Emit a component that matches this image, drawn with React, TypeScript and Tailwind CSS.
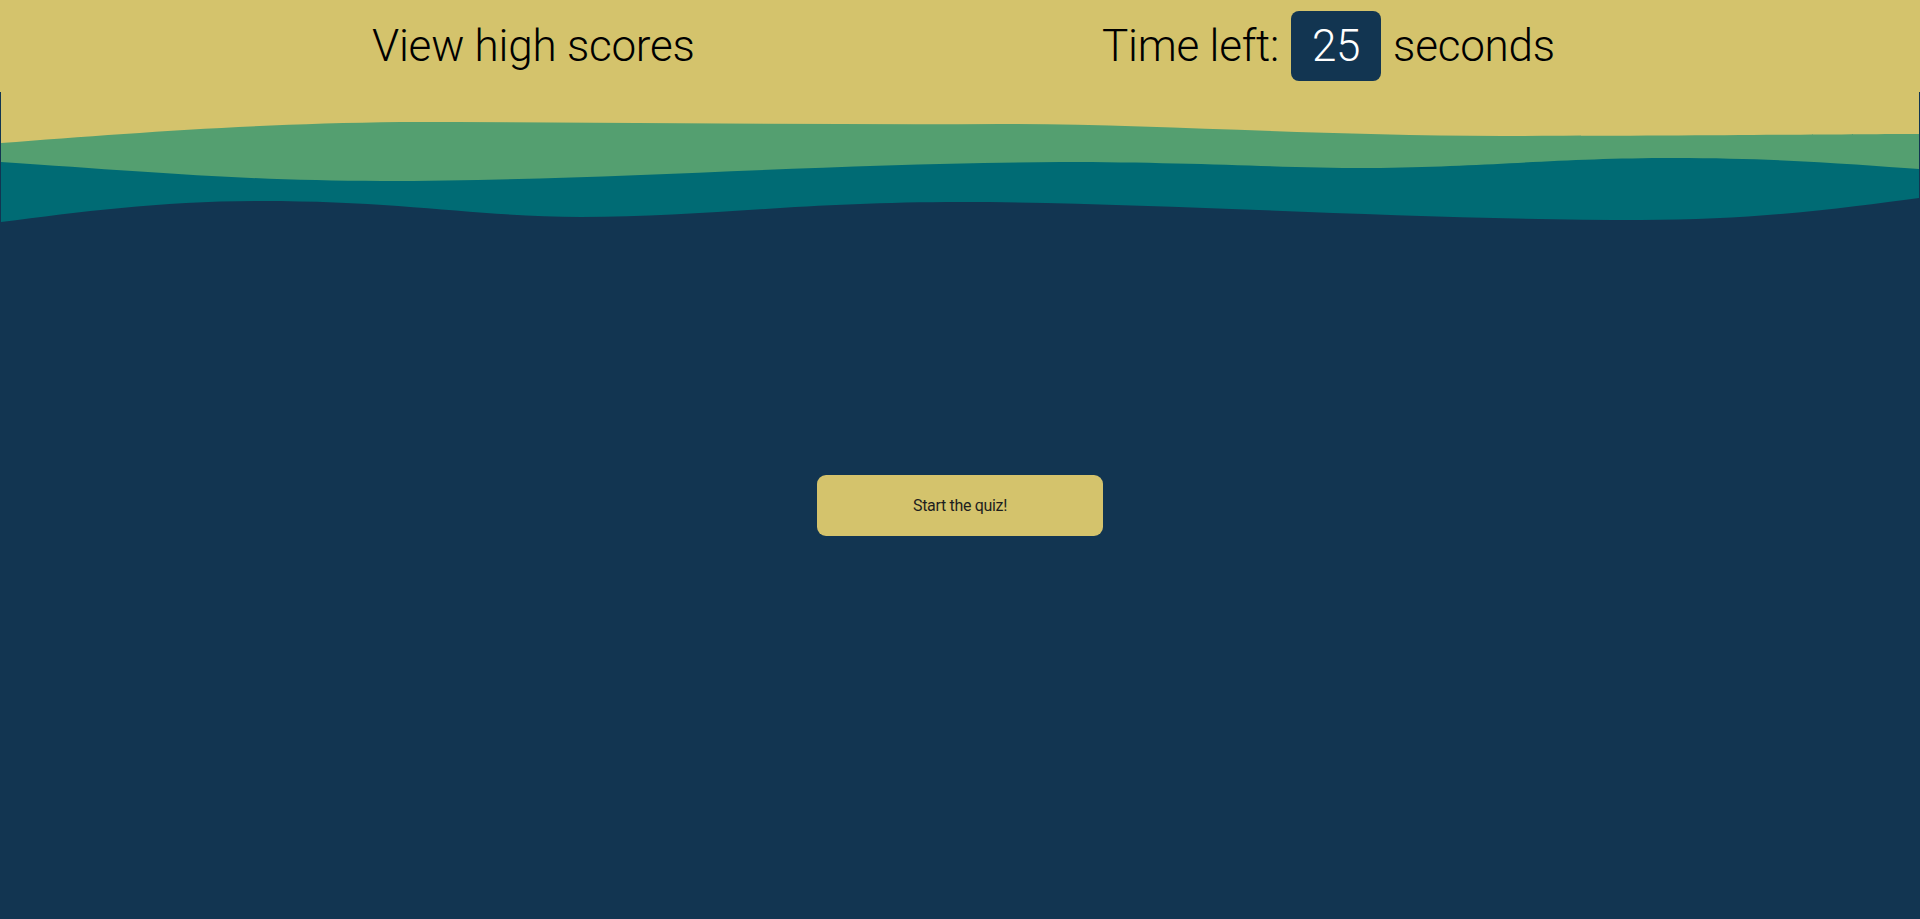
import React from 'react';

const GOLD = '#d4c36c';

const Waves = () => (
  <div className="bg-[#123551] px-px">
    <svg viewBox="0 0 1918 140" preserveAspectRatio="none" className="block w-full h-[140px]">
      <rect x="0" y="0" width="1918" height="140" fill={GOLD} />
      <path
        d="M0,51 C120,42 240,32 400,30 C600,30 800,33 1000,32 C1150,32 1300,43 1500,44 C1700,44 1850,42 1918,42 V140 H0 Z"
        fill="#549f70"
      />
      <path
        d="M0,70 C150,80 250,89 380,89 C600,89 800,72 1060,70 C1200,70 1300,77 1380,76 C1500,74 1560,66 1673,66 C1780,66 1860,73 1918,77 V140 H0 Z"
        fill="#006b74"
      />
      <path
        d="M0,130 C80,120 160,109 260,109 C400,109 480,125 580,125 C700,125 800,110 960,110 C1150,110 1400,128 1640,128 C1760,128 1850,115 1918,106 V140 H0 Z"
        fill="#123551"
      />
    </svg>
  </div>
);

export default function App() {
  return (
    <div className="min-h-[919px] bg-[#123551] font-['Roboto',sans-serif]">
      <header className="h-[92px] bg-[#d4c36c] flex items-center pl-[372px] text-black font-light text-[44px] tracking-[-0.005em]">
        <div className="w-[730px] leading-none">View high scores</div>
        <div className="flex items-center gap-3 leading-none">
          <span>Time left:</span>
          <span className="w-[90px] h-[70px] rounded-lg bg-[#123551] text-white flex items-center justify-center">25</span>
          <span>seconds</span>
        </div>
      </header>
      <Waves />
      <main className="flex justify-center pt-[243px]">
        <button className="w-[286px] h-[61px] rounded-[9px] bg-[#d4c36c] text-[#1e1e1e] text-[16px] tracking-[-0.02em]">
          Start the quiz!
        </button>
      </main>
    </div>
  );
}
